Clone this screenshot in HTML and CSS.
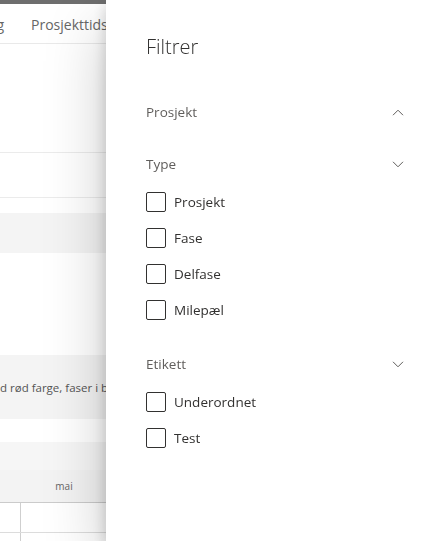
FILE: index.html
```html
<!DOCTYPE html>
<html lang="no">
<head>
<meta charset="utf-8">
<title>Filtrer</title>
<link rel="stylesheet" href="styles.css">
</head>
<body>
<div class="page">
  <div class="topbar"></div>
  <div class="tabs">
    <div class="tab tab-cut"><span>Planlegging</span></div>
    <div class="tab">Prosjekttidslinje</div>
  </div>
  <div class="block block-a"></div>
  <div class="block block-b"></div>
  <div class="spacer-s"></div>
  <div class="band band-a"></div>
  <div class="spacer-l"></div>
  <div class="band band-info">
    <div class="info-line"><span class="cut"><span>Tidslinjen viser prosjekter me</span></span><span class="rest">d rød farge, faser i blå farge og milepæler</span></div>
  </div>
  <div class="spacer-m"></div>
  <div class="timeline">
    <div class="tl-top"></div>
    <div class="tl-months"><div class="month-gap"></div><div class="month">mai</div></div>
    <div class="tl-row"><div class="cell cell-a"></div><div class="cell"></div></div>
    <div class="tl-row"><div class="cell cell-a"></div><div class="cell"></div></div>
  </div>
</div>

<aside class="panel">
  <h1 class="panel-title">Filtrer</h1>
  <div class="sections">
    <section class="group">
      <div class="group-head"><span>Prosjekt</span>
        <svg class="chev" viewBox="0 0 12 7" width="12" height="7"><path d="M1 6.2 L6 1.2 L11 6.2" fill="none" stroke="#605e5c" stroke-width="1"/></svg>
      </div>
    </section>
    <section class="group">
      <div class="group-head"><span>Type</span>
        <svg class="chev" viewBox="0 0 12 7" width="12" height="7"><path d="M1 0.8 L6 5.8 L11 0.8" fill="none" stroke="#605e5c" stroke-width="1"/></svg>
      </div>
      <ul class="items">
        <li class="item"><span class="box"></span><span class="label">Prosjekt</span></li>
        <li class="item"><span class="box"></span><span class="label">Fase</span></li>
        <li class="item"><span class="box"></span><span class="label">Delfase</span></li>
        <li class="item"><span class="box"></span><span class="label">Milepæl</span></li>
      </ul>
    </section>
    <section class="group">
      <div class="group-head"><span>Etikett</span>
        <svg class="chev" viewBox="0 0 12 7" width="12" height="7"><path d="M1 0.8 L6 5.8 L11 0.8" fill="none" stroke="#605e5c" stroke-width="1"/></svg>
      </div>
      <ul class="items">
        <li class="item"><span class="box"></span><span class="label">Underordnet</span></li>
        <li class="item"><span class="box"></span><span class="label">Test</span></li>
      </ul>
    </section>
  </div>
</aside>
</body>
</html>
```

FILE: styles.css
```css
* { box-sizing: border-box; }
html, body { margin: 0; padding: 0; }
body {
  font-family: "Open Sans", "Noto Sans", "Liberation Sans", sans-serif;
  color: #323130;
  background: #fff;
  overflow: hidden;
  width: 432px;
  height: 541px;
}

/* background page */
.page { width: 432px; overflow: hidden; }
.topbar { height: 4px; background: #6e6e6e; }
.tabs {
  height: 40px;
  display: flex;
  align-items: center;
  border-bottom: 1px solid #e9e9e9;
  font-size: 14px;
  color: #666;
  white-space: nowrap;
}
.tab-cut {
  width: 4px;
  display: flex;
  justify-content: flex-end;
  margin-right: 27px;
}
.tab { padding-top: 2px; }
.block-a { height: 109px; border-bottom: 1px solid #ebebeb; }
.block-b { height: 45px; border-bottom: 1px solid #ebebeb; }
.spacer-s { height: 15px; }
.band { background: #f4f4f4; }
.band-a { height: 40px; }
.spacer-l { height: 102px; }
.band-info {
  height: 64px;
  display: flex;
  align-items: center;
  font-size: 11.5px;
  color: #555;
  white-space: nowrap;
}
.info-line { display: flex; }
.cut { width: 0; display: flex; justify-content: flex-end; }
.spacer-m { height: 23px; }
.tl-top { height: 28px; background: #f6f6f6; }
.tl-months {
  height: 33px;
  display: flex;
  background: #f3f3f3;
  border-bottom: 1px solid #cbcbcb;
  font-size: 10px;
  color: #666;
}
.month-gap { width: 21px; }
.month { width: 86px; text-align: center; line-height: 32px; }
.tl-row { height: 30px; display: flex; border-bottom: 1px solid #dcdcdc; }
.cell-a { width: 21px; border-right: 1px solid #cfcfcf; }

/* panel (overlay) */
.panel {
  position: fixed;
  top: 0;
  right: 0;
  bottom: 0;
  width: 326px;
  background: #fff;
  padding: 33px 28px 0 40px;
  box-shadow: 0 25.6px 57.6px 0 rgba(0,0,0,0.22), 0 4.8px 14.4px 0 rgba(0,0,0,0.18);
}
.panel-title {
  margin: 0;
  font-size: 20px;
  font-weight: 300;
  line-height: 28px;
  color: #323130;
}
.sections {
  margin-top: 33px;
  display: flex;
  flex-direction: column;
  gap: 16px;
}
.group-head {
  height: 36px;
  display: flex;
  align-items: center;
  justify-content: space-between;
  font-size: 13.5px;
  color: #605e5c;
}
.chev { display: block; margin-right: 0; }
.items {
  list-style: none;
  margin: 0;
  padding: 10px 0 10px 0;
  display: flex;
  flex-direction: column;
  gap: 16px;
}
.item { display: flex; align-items: center; height: 20px; }
.box {
  width: 20px;
  height: 20px;
  border: 1px solid #323130;
  border-radius: 2px;
  margin-right: 8px;
  flex: none;
}
.label { font-size: 13.5px; color: #323130; }
```
